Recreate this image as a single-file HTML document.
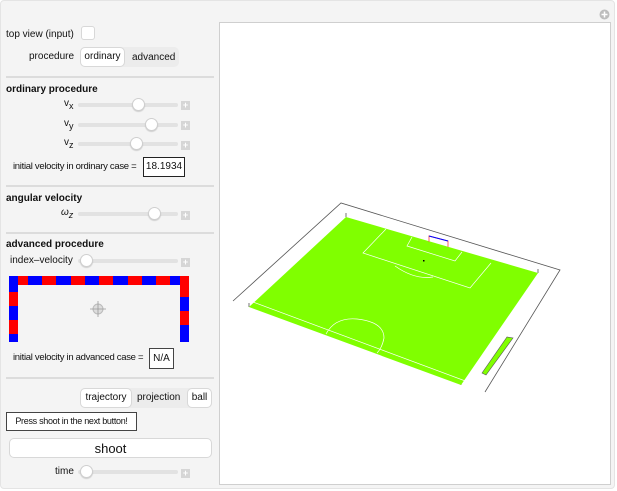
<!DOCTYPE html>
<html><head><meta charset="utf-8"><style>
*{margin:0;padding:0;box-sizing:border-box}
body{width:617px;height:491px;background:#fff;font-family:"Liberation Sans",sans-serif;font-size:10px;color:#111;position:relative;overflow:hidden}
.frame{position:absolute;left:0;top:0;width:615px;height:489px;background:#f4f4f4;border:1px solid #e4e4e4;border-radius:4px}
.a{position:absolute;white-space:nowrap}
.sep{position:absolute;left:6px;width:208px;height:2px;background:#dcdcdc}
.b{font-weight:bold}
.track{position:absolute;height:4px;width:100px;background:#e2e2e2;border-radius:2px}
.thumb{position:absolute;width:13px;height:13px;border-radius:50%;background:#fff;border:1px solid #cfcfcf;box-shadow:0 1px 1px rgba(0,0,0,.15)}
.plus{position:absolute;width:9px;height:9px;background:#d6d6d6;color:#fff;font-size:9px;line-height:9px;text-align:center;font-weight:bold}
.box{position:absolute;border:1px solid #222;background:#fff;text-align:center;white-space:nowrap}
.btn{position:absolute;background:#fff;border:1px solid #d8d8d8;border-radius:5px;text-align:center;white-space:nowrap}
.seg{position:absolute;background:#ececec;border-radius:5px}
.sm{font-size:9.5px;letter-spacing:-0.3px}
</style></head><body>
<div class="frame"></div>
<div class="a" style="left:6px;top:29px">top view (input)</div>
<div class="btn" style="left:81px;top:26px;width:14px;height:14px;border-radius:3px"></div>
<div class="a" style="left:29px;top:51px">procedure</div>
<div class="seg" style="left:80px;top:47px;width:99px;height:20px"></div>
<div class="btn" style="left:80px;top:47px;width:45px;height:20px;line-height:18px">ordinary</div>
<div class="a" style="left:132px;top:52px">advanced</div>
<div class="sep" style="top:76px"></div>
<div class="a b" style="left:6px;top:84px">ordinary procedure</div>
<div class="a" style="left:64px;top:98px">v<sub style="font-size:9px">x</sub></div>
<div class="track" style="left:78px;top:103px"></div><div class="thumb" style="left:132px;top:98px"></div><div class="plus" style="left:181px;top:101px">+</div>
<div class="a" style="left:64px;top:118px">v<sub style="font-size:9px">y</sub></div>
<div class="track" style="left:78px;top:123px"></div><div class="thumb" style="left:145px;top:118px"></div><div class="plus" style="left:181px;top:121px">+</div>
<div class="a" style="left:64px;top:137px">v<sub style="font-size:9px">z</sub></div>
<div class="track" style="left:78px;top:142px"></div><div class="thumb" style="left:130px;top:137px"></div><div class="plus" style="left:181px;top:141px">+</div>
<div class="a sm" style="left:13px;top:161px">initial velocity in ordinary case =</div>
<div class="box" style="left:143px;top:157px;width:42px;height:20px;line-height:18px;font-size:10px">18.1934</div>
<div class="sep" style="top:185px"></div>
<div class="a b" style="left:6px;top:193px">angular velocity</div>
<div class="a" style="left:61px;top:207px;font-style:italic">ω<sub style="font-size:9px">z</sub></div>
<div class="track" style="left:78px;top:212px"></div><div class="thumb" style="left:148px;top:207px"></div><div class="plus" style="left:181px;top:211px">+</div>
<div class="sep" style="top:232px"></div>
<div class="a b" style="left:6px;top:239px">advanced procedure</div>
<div class="a" style="left:10px;top:255px">index–velocity</div>
<div class="track" style="left:78px;top:259px"></div><div class="thumb" style="left:80px;top:254px"></div><div class="plus" style="left:181px;top:258px">+</div>
<svg class="a" style="left:0;top:270px" width="200" height="80">
<rect x="9" y="6" width="180" height="9" fill="#0000ff"/>
<g fill="#ff0000"><rect x="14" y="6" width="14" height="9"/><rect x="42" y="6" width="14" height="9"/><rect x="71" y="6" width="14" height="9"/><rect x="99" y="6" width="14" height="9"/><rect x="128" y="6" width="14" height="9"/><rect x="156" y="6" width="14" height="9"/></g>
<rect x="9" y="6" width="9" height="66" fill="#0000ff"/>
<g fill="#ff0000"><rect x="9" y="22" width="9" height="14"/><rect x="9" y="50" width="9" height="14"/></g>
<rect x="180" y="14" width="9" height="58" fill="#0000ff"/>
<g fill="#ff0000"><rect x="180" y="14" width="9" height="13"/><rect x="180" y="41" width="9" height="14"/><rect x="180" y="6" width="9" height="8"/></g>
<circle cx="98" cy="39" r="5" fill="#ddd" stroke="#bbb"/><path d="M90 39h16M98 31v16" stroke="#999" stroke-width=".8"/>
</svg>
<div class="a sm" style="left:13px;top:352px">initial velocity in advanced case =</div>
<div class="box" style="left:149px;top:348px;width:25px;height:21px;line-height:19px;font-size:10px;border-color:#444">N/A</div>
<div class="sep" style="top:377px"></div>
<div class="seg" style="left:80px;top:388px;width:132px;height:20px"></div>
<div class="btn" style="left:80px;top:388px;width:52px;height:20px;line-height:18px">trajectory</div>
<div class="a" style="left:137px;top:392px">projection</div>
<div class="btn" style="left:187px;top:388px;width:25px;height:20px;line-height:18px">ball</div>
<div class="box sm" style="left:6px;top:412px;width:131px;height:19px;line-height:17px;border-color:#444;font-size:9px">Press shoot in the next button!</div>
<div class="btn" style="left:9px;top:438px;width:203px;height:20px;line-height:19px;font-size:13px">shoot</div>
<div class="a" style="left:55px;top:466px">time</div>
<div class="track" style="left:78px;top:470px"></div><div class="thumb" style="left:80px;top:465px"></div><div class="plus" style="left:181px;top:469px">+</div>
<div class="a" style="left:219px;top:22px;width:392px;height:463px;background:#fff;border:1px solid #cfcfcf"></div>
<svg class="a" style="left:599px;top:9px" width="11" height="11"><circle cx="5.5" cy="5.5" r="5" fill="#bdbdbd"/><path d="M5.5 2.5v6M2.5 5.5h6" stroke="#fff" stroke-width="1.5"/></svg>
<svg class="a" style="left:0;top:0" width="617" height="491">
<g stroke="#555" stroke-width=".8" fill="none">
<path d="M233 301L341 203L560 270L485 392"/>
<path d="M346 217v-4M538 273v-4M461 385v-4M249 307v-4"/>
</g>
<polygon points="346,217 538,273 461,385 249,307" fill="#80ff00"/>
<polygon points="482,373 507,337 513,338 486,375" fill="#80ff00" stroke="#555" stroke-width=".6"/>
<g stroke="#fff" stroke-width=".7" fill="none">
<path d="M386 229L363 253L470 288L491 263"/>
<path d="M412 237L407 246L455 261L462 252"/>
<path d="M253 302L468 382"/>
<path d="M395 266Q415 280 433 277"/>
<path d="M326 334Q335 317 357 319Q384 322 384 338Q382 348 377 353"/>
</g>
<path d="M429 242v-6L448 241v6" stroke="#ff6060" stroke-width="1" fill="none"/>
<path d="M429 236L448 241" stroke="#0000ff" stroke-width="1"/>
<rect x="423" y="260" width="1.5" height="1.5" fill="#000"/>
</svg>
</body></html>
